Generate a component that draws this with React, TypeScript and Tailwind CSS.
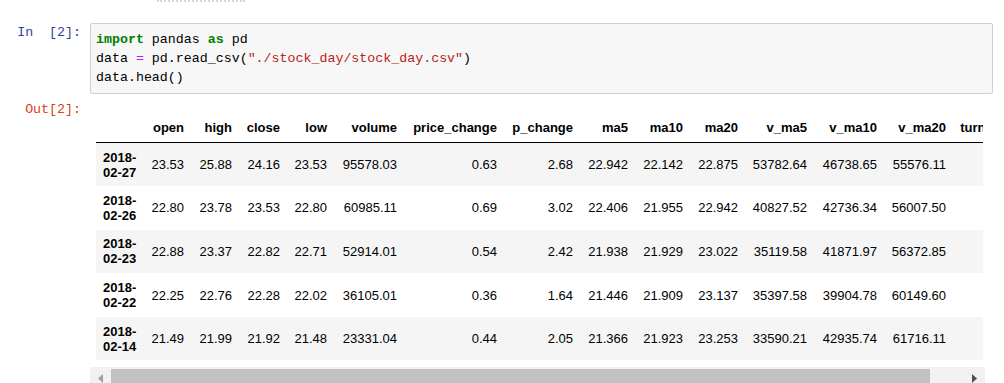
const mono = "font-['Liberation_Mono',monospace] text-[13.3px] leading-[19px]";

// Column widths (px) measured off the notebook render, index column first.
const columns: { name: string; w: string }[] = [
  { name: "open", w: "w-[47px]" },
  { name: "high", w: "w-[48px]" },
  { name: "close", w: "w-[48px]" },
  { name: "low", w: "w-[47px]" },
  { name: "volume", w: "w-[70px]" },
  { name: "price_change", w: "w-[100px]" },
  { name: "p_change", w: "w-[76px]" },
  { name: "ma5", w: "w-[55px]" },
  { name: "ma10", w: "w-[55px]" },
  { name: "ma20", w: "w-[55px]" },
  { name: "v_ma5", w: "w-[69px]" },
  { name: "v_ma10", w: "w-[70px]" },
  { name: "v_ma20", w: "w-[69px]" },
  { name: "turnover", w: "w-[67px]" },
];

const rows: { date: [string, string]; values: string[] }[] = [
  {
    date: ["2018-", "02-27"],
    values: ["23.53", "25.88", "24.16", "23.53", "95578.03", "0.63", "2.68", "22.942", "22.142", "22.875", "53782.64", "46738.65", "55576.11", "2.39"],
  },
  {
    date: ["2018-", "02-26"],
    values: ["22.80", "23.78", "23.53", "22.80", "60985.11", "0.69", "3.02", "22.406", "21.955", "22.942", "40827.52", "42736.34", "56007.50", "1.53"],
  },
  {
    date: ["2018-", "02-23"],
    values: ["22.88", "23.37", "22.82", "22.71", "52914.01", "0.54", "2.42", "21.938", "21.929", "23.022", "35119.58", "41871.97", "56372.85", "1.32"],
  },
  {
    date: ["2018-", "02-22"],
    values: ["22.25", "22.76", "22.28", "22.02", "36105.01", "0.36", "1.64", "21.446", "21.909", "23.137", "35397.58", "39904.78", "60149.60", "0.90"],
  },
  {
    date: ["2018-", "02-14"],
    values: ["21.49", "21.99", "21.92", "21.48", "23331.04", "0.44", "2.05", "21.366", "21.923", "23.253", "33590.21", "42935.74", "61716.11", "0.58"],
  },
];

function Prompt({ label, tone }: { label: string; tone: string }) {
  return (
    <div className={`w-[90px] shrink-0 whitespace-pre pr-[9px] text-right ${mono} ${tone}`}>
      {label}
    </div>
  );
}

// The frame is wider than the cell, so the last column runs under the clip.
function DataFrame() {
  return (
    <div className="w-[887px] overflow-hidden">
      <table className="w-[924px] table-fixed border-collapse font-['Liberation_Sans',Arial,sans-serif] text-[13px] leading-[15px] text-black">
        <thead>
          <tr className="border-b border-black">
            <th className="w-[48px] px-[7px] py-[7px]" />
            {columns.map((c) => (
              <th key={c.name} className={`${c.w} whitespace-nowrap px-[7px] py-[7px] text-right font-bold`}>
                {c.name}
              </th>
            ))}
          </tr>
        </thead>
        <tbody>
          {rows.map((r, i) => (
            <tr key={r.date[1]} className={`h-[43.6px] ${i % 2 === 0 ? "bg-[#f5f5f5]" : "bg-white"}`}>
              <th className="px-[7px] text-left align-middle font-bold">
                {r.date[0]}
                <br />
                {r.date[1]}
              </th>
              {r.values.map((v, j) => (
                <td key={j} className="whitespace-nowrap px-[7px] text-right align-middle">
                  {v}
                </td>
              ))}
            </tr>
          ))}
        </tbody>
      </table>
    </div>
  );
}

function ScrollBar() {
  return (
    <div className="mt-[7px] flex h-[17px] w-[895px] items-stretch bg-[#f1f1f1]">
      <div className="flex w-[21px] shrink-0 items-center justify-center">
        <svg width="5" height="9" viewBox="0 0 5 9" className="mt-[6px]">
          <path d="M5 0 L0 4.5 L5 9 Z" fill="#a3a3a3" />
        </svg>
      </div>
      <div className="mt-[2px] w-[819px] shrink-0 bg-[#c1c1c1]" />
      <div className="flex flex-1 items-center justify-end pr-[8px]">
        <svg width="5" height="9" viewBox="0 0 5 9" className="mt-[6px]">
          <path d="M0 0 L5 4.5 L0 9 Z" fill="#505050" />
        </svg>
      </div>
    </div>
  );
}

export default function App() {
  return (
    <div className="h-[383px] w-[1004px] overflow-hidden bg-white">
      {/* tail of the previous cell, cut off at the top edge */}
      <div className="h-[23px]">
        <div className="ml-[157px] w-[88px] border-t-2 border-dotted border-[#d6d6d6]" />
      </div>

      {/* input cell */}
      <div className="flex">
        <Prompt label={"In  [2]:"} tone="text-[#303f9f]" />
        <div className={`h-[71px] w-[903px] rounded-[2px] border border-[#cfcfcf] bg-[#f7f7f7] px-[5px] py-[6px] ${mono} text-black`}>
          <div className="whitespace-pre">
            <span className="font-bold text-[#008000]">import</span> pandas{" "}
            <span className="font-bold text-[#008000]">as</span> pd
          </div>
          <div className="whitespace-pre">
            data <span className="text-[#aa22ff]">=</span> pd.read_csv(
            <span className="text-[#ba2121]">"./stock_day/stock_day.csv"</span>)
          </div>
          <div className="whitespace-pre">data.head()</div>
        </div>
      </div>

      {/* output cell */}
      <div className="mt-[6px] flex">
        <Prompt label="Out[2]:" tone="text-[#d84315]" />
        <div className="flex flex-col">
          <div className="pl-[6px] pt-[13px]">
            <DataFrame />
          </div>
          <ScrollBar />
        </div>
      </div>
    </div>
  );
}
